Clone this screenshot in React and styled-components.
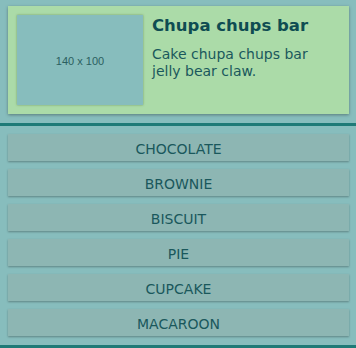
import React from "react";
import styled, { createGlobalStyle } from "styled-components";

const Global = createGlobalStyle`
  html, body { margin: 0; padding: 0; background: #87bdbd; }
  body { font-family: "DejaVu Sans", Verdana, sans-serif; }
`;

const Page = styled.div`
  width: 356px;
  height: 348px;
  background: #87bdbd;
  overflow: hidden;
`;

const Header = styled.section`
  padding: 6px 7px 9px 8px;
  border-bottom: 3px solid #1f7a77;
`;

const Card = styled.div`
  display: flex;
  gap: 9px;
  padding: 9px;
  height: 90px;
  background: #abdba8;
  box-shadow: 0 1px 3px rgba(0, 0, 0, 0.35);
`;

const Thumb = styled.div`
  flex: 0 0 126px;
  height: 90px;
  display: flex;
  align-items: center;
  justify-content: center;
  background: #87bdbd;
  box-shadow: 0 0 2px rgba(80, 110, 60, 0.6);
`;

const ThumbLabel = styled.span`
  font-family: "Liberation Sans", Arial, sans-serif;
  font-size: 11px;
  line-height: 13px;
  color: #2b5f60;
  margin-top: 2px;
`;

const Body = styled.div`
  display: flex;
  flex-direction: column;
  max-width: 180px;
`;

const Title = styled.h2`
  margin: 1.3px 0 0;
  font-size: 16.5px;
  font-weight: bold;
  line-height: 20px;
  color: #0f4d52;
  white-space: nowrap;
`;

const Text = styled.p`
  margin: 9.6px 0 0;
  font-size: 14px;
  line-height: 17px;
  color: #1a585c;
`;

const List = styled.nav`
  display: flex;
  flex-direction: column;
  gap: 8px;
  padding: 8px 7px 9px 8px;
  border-bottom: 3px solid #1f7a77;
`;

const Item = styled.button`
  height: 27px;
  border: none;
  padding: 2px 0 0;
  background: #8db6b3;
  box-shadow: 0 1px 2px rgba(0, 0, 0, 0.3);
  font-family: "DejaVu Sans", Verdana, sans-serif;
  font-size: 14px;
  color: #1a585c;
  text-transform: uppercase;
  cursor: pointer;
`;

const items = ["Chocolate", "Brownie", "Biscuit", "Pie", "Cupcake", "Macaroon"];

export default function App() {
  return (
    <Page>
      <Global />
      <Header>
        <Card>
          <Thumb>
            <ThumbLabel>140 x 100</ThumbLabel>
          </Thumb>
          <Body>
            <Title>Chupa chups bar</Title>
            <Text>Cake chupa chups bar jelly bear claw.</Text>
          </Body>
        </Card>
      </Header>
      <List>
        {items.map((it) => (
          <Item key={it}>{it}</Item>
        ))}
      </List>
    </Page>
  );
}
